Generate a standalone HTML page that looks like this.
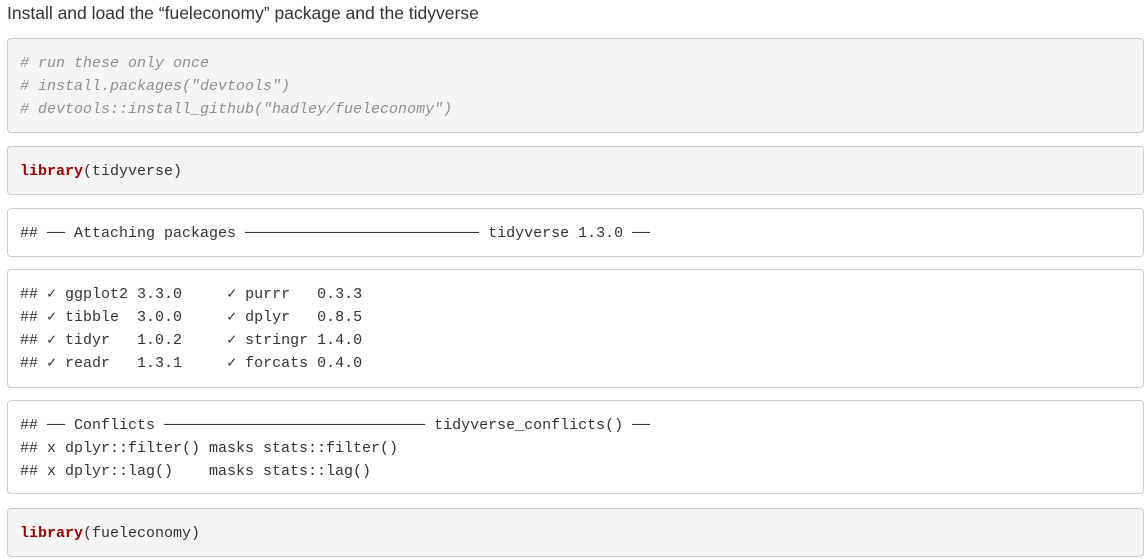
<!DOCTYPE html>
<html><head><meta charset="utf-8"><style>
body{margin:0;background:#fff;width:1148px;height:559px;overflow:hidden;position:relative;}
.t{position:absolute;left:7px;top:3px;font:17.5px "Liberation Sans",Arial,sans-serif;color:#333;}
.b{position:absolute;left:7px;width:1137px;border:1px solid #ccc;border-radius:4px;box-sizing:border-box;}
.g{background:#f5f5f5;}
pre{margin:0;position:absolute;left:12px;font:15px/23px "Liberation Mono","DejaVu Sans Mono",monospace;color:#333;white-space:pre;}
.c{color:#8f8f8f;font-style:italic;}
.k{color:#900;font-weight:bold;}
</style></head><body>
<div class="t">Install and load the “fueleconomy” package and the tidyverse</div>
<div class="b g" style="top:38px;height:95px"><pre style="top:13px" class="c"># run these only once
# install.packages("devtools")
# devtools::install_github("hadley/fueleconomy")</pre></div>
<div class="b g" style="top:146px;height:49px"><pre style="top:13px"><span class="k">library</span>(tidyverse)</pre></div>
<div class="b" style="top:208px;height:49px"><pre style="top:13px">## ── Attaching packages ────────────────────────── tidyverse 1.3.0 ──</pre></div>
<div class="b" style="top:269px;height:119px"><pre style="top:13px">## ✓ ggplot2 3.3.0     ✓ purrr   0.3.3
## ✓ tibble  3.0.0     ✓ dplyr   0.8.5
## ✓ tidyr   1.0.2     ✓ stringr 1.4.0
## ✓ readr   1.3.1     ✓ forcats 0.4.0</pre></div>
<div class="b" style="top:400px;height:94px"><pre style="top:13px">## ── Conflicts ───────────────────────────── tidyverse_conflicts() ──
## x dplyr::filter() masks stats::filter()
## x dplyr::lag()    masks stats::lag()</pre></div>
<div class="b g" style="top:508px;height:49px"><pre style="top:13px"><span class="k">library</span>(fueleconomy)</pre></div>
</body></html>
